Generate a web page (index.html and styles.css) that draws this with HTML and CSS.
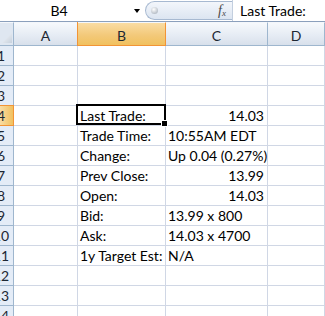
FILE: index.html
```html
<!DOCTYPE html>
<html lang="en">
<head>
    <meta charset="UTF-8">
    <title>Book1 - Quote</title>
    <link rel="stylesheet" href="styles.css">
</head>
<body>
    <!-- Name box + formula bar -->
    <div class="formula-bar">
        <div class="name-box"><span class="name">B4</span><span class="drop"></span></div>
        <div class="fx-pill"><span class="knob"></span><span class="fx">f<sub>x</sub></span></div>
        <div class="formula">Last Trade:</div>
    </div>

    <div class="sheet">
        <div class="corner"><span class="tri"></span></div>
        <div class="col-head">A</div>
        <div class="col-head sel">B</div>
        <div class="col-head">C</div>
        <div class="col-head">D</div>

        <div class="row-head"><span>1</span></div><div class="cell"></div><div class="cell"></div><div class="cell"></div><div class="cell"></div>
        <div class="row-head"><span>2</span></div><div class="cell"></div><div class="cell"></div><div class="cell"></div><div class="cell"></div>
        <div class="row-head"><span>3</span></div><div class="cell"></div><div class="cell"></div><div class="cell"></div><div class="cell"></div>
        <div class="row-head sel"><span>4</span></div><div class="cell"></div><div class="cell active">Last Trade:<div class="sel-box"><i class="handle"></i></div></div><div class="cell num">14.03</div><div class="cell"></div>
        <div class="row-head"><span>5</span></div><div class="cell"></div><div class="cell">Trade Time:</div><div class="cell">10:55AM EDT</div><div class="cell"></div>
        <div class="row-head"><span>6</span></div><div class="cell"></div><div class="cell">Change:</div><div class="cell">Up 0.04 (0.27%)</div><div class="cell"></div>
        <div class="row-head"><span>7</span></div><div class="cell"></div><div class="cell">Prev Close:</div><div class="cell num">13.99</div><div class="cell"></div>
        <div class="row-head"><span>8</span></div><div class="cell"></div><div class="cell">Open:</div><div class="cell num">14.03</div><div class="cell"></div>
        <div class="row-head"><span>9</span></div><div class="cell"></div><div class="cell">Bid:</div><div class="cell">13.99 x 800</div><div class="cell"></div>
        <div class="row-head"><span>10</span></div><div class="cell"></div><div class="cell">Ask:</div><div class="cell">14.03 x 4700</div><div class="cell"></div>
        <div class="row-head"><span>11</span></div><div class="cell"></div><div class="cell">1y Target Est:</div><div class="cell">N/A</div><div class="cell"></div>
        <div class="row-head"><span>12</span></div><div class="cell"></div><div class="cell"></div><div class="cell"></div><div class="cell"></div>
        <div class="row-head"><span>13</span></div><div class="cell"></div><div class="cell"></div><div class="cell"></div><div class="cell"></div>
        <div class="row-head"><span>14</span></div><div class="cell"></div><div class="cell"></div><div class="cell"></div><div class="cell"></div>
    </div>
</body>
</html>
```

FILE: styles.css
```css
body {
    margin: 0;
    font-family: Lato, "Liberation Sans", sans-serif;
    font-size: 14px;
    color: #000;
    background: #fff;
    overflow: hidden;
}

/* formula bar */
.formula-bar {
    display: flex;
    height: 22px;
    box-sizing: border-box;
    border-bottom: 1px solid #8ba0bc;
}

.name-box {
    width: 145px;
    display: flex;
    align-items: center;
}

.name-box .name {
    width: 118px;
    text-align: center;
    line-height: 21px;
}

.drop {
    margin-left: 16px;
    border-top: 4px solid #000;
    border-left: 3px solid transparent;
    border-right: 3px solid transparent;
}

.fx-pill {
    width: 87px;
    height: 19px;
    margin-top: 1px;
    box-sizing: border-box;
    border: 1px solid #a7b9d1;
    border-right: none;
    border-radius: 10px 0 0 10px;
    background: linear-gradient(#f3f6fb, #dce5f1);
    display: flex;
    align-items: center;
    justify-content: space-between;
}

.knob {
    width: 7px;
    height: 7px;
    margin-left: 5px;
    border-radius: 50%;
    background: radial-gradient(circle at 40% 35%, #fff, #b9c0c9 70%);
}

.fx {
    font-family: "Liberation Serif", serif;
    font-style: italic;
    font-size: 14px;
    color: #4a4a4a;
    margin-right: 6px;
}

.fx sub {
    font-size: 9px;
    vertical-align: -1px;
}

.formula {
    flex-grow: 1;
    padding-left: 7px;
    border-left: 1px solid #c3cfdf;
    line-height: 21px;
}

/* sheet grid */
.sheet {
    display: grid;
    grid-template-columns: 14px 64px 88px 102px 1fr;
    grid-template-rows: 24px;
    grid-auto-rows: 20px;
}

.sheet > div {
    box-sizing: border-box;
}

.corner {
    border-top: 1px solid #f4f7fb;
    border-right: 1px solid #9eb6ce;
    border-bottom: 1px solid #9eb6ce;
    background: #dfe7f1;
    display: flex;
    align-items: flex-end;
    justify-content: flex-end;
    padding: 0 1px 2px 0;
}

.corner .tri {
    width: 10px;
    height: 10px;
    background: linear-gradient(135deg, #f7f9fc, #c7d1dd);
    clip-path: polygon(100% 0, 100% 100%, 0 100%);
}

.col-head {
    border-top: 1px solid #f4f7fb;
    border-right: 1px solid #9eb6ce;
    border-bottom: 1px solid #9eb6ce;
    background: linear-gradient(#f6f9fc, #e6ecf4 55%, #d8e0eb);
    text-align: center;
    line-height: 25px;
    color: #1d2733;
}

.col-head.sel {
    background: linear-gradient(#f9dca3, #f3c97a 55%, #f1c15f);
    border-right-color: #f29436;
    border-bottom-color: #f29436;
    box-shadow: -1px 0 0 #f29436;
}

.row-head {
    border-right: 1px solid #9eb6ce;
    border-bottom: 1px solid #9eb6ce;
    background: #e4ecf7;
    overflow: hidden;
    line-height: 19px;
    color: #1d2733;
}

.row-head span {
    display: block;
    width: 26px;
    margin-left: -12px;
    text-align: center;
}

.row-head.sel {
    background: linear-gradient(90deg, #f9dca3, #f1c15f);
    border-right-color: #f29436;
    border-bottom-color: #f29436;
    box-shadow: 0 -1px 0 #f29436;
}

.cell {
    border-right: 1px solid #d0d7e5;
    border-bottom: 1px solid #d0d7e5;
    padding: 0 3px 0 2px;
    line-height: 19px;
    white-space: nowrap;
}

.cell.num {
    text-align: right;
}

/* active cell frame */
.cell.active {
    position: relative;
}

.sel-box {
    position: absolute;
    left: -2px;
    top: -2px;
    width: 90px;
    height: 21px;
    box-sizing: border-box;
    border: 2px solid #000;
}

.handle {
    position: absolute;
    right: -4px;
    bottom: -4px;
    width: 5px;
    height: 5px;
    background: #000;
    border: 1px solid #fff;
}
```
